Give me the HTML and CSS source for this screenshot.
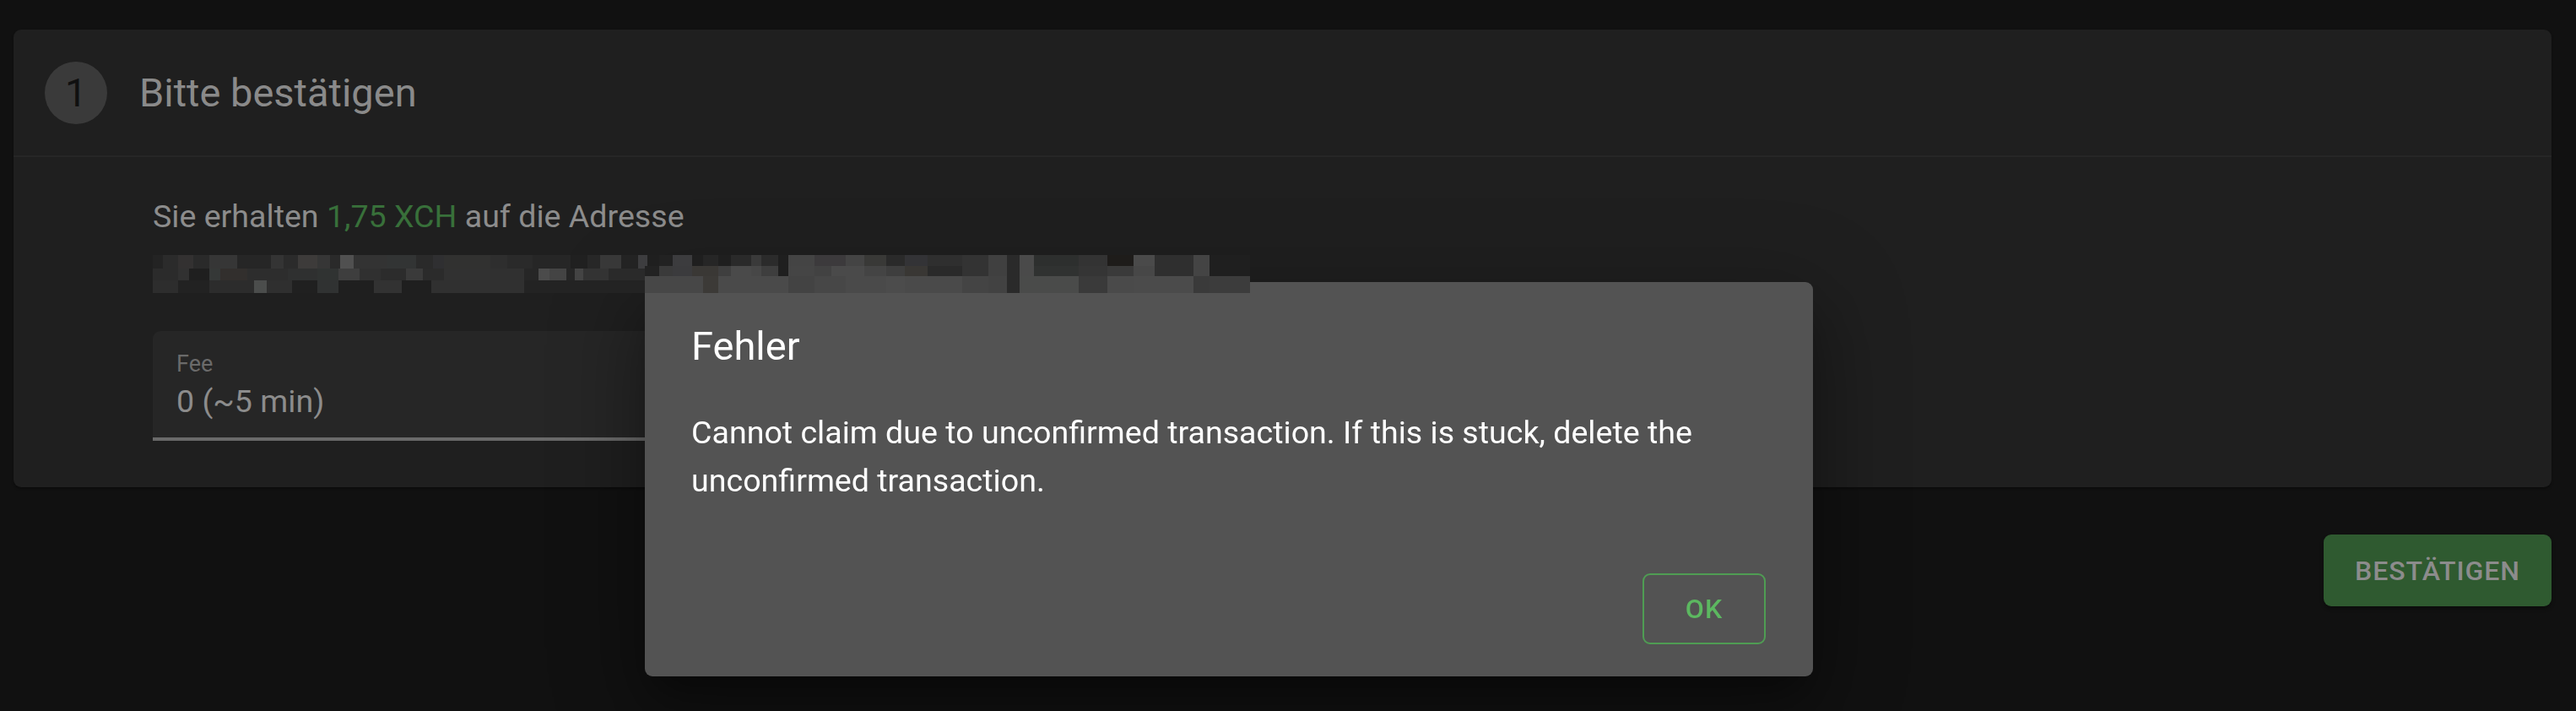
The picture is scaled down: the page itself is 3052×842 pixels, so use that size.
FILE: index.html
```html
<!DOCTYPE html>
<html lang="de">
<head>
<meta charset="utf-8">
<title>Bitte bestätigen</title>
<link rel="stylesheet" href="styles.css">
</head>
<body>
<div class="page">
  <section class="card">
    <header class="card-head">
      <span class="step-icon">1</span>
      <h2 class="step-title">Bitte bestätigen</h2>
    </header>
    <div class="card-body">
      <p class="receive">Sie erhalten <span class="amount">1,75 XCH</span> auf die Adresse</p>
      <div class="address" aria-label="Adresse (unkenntlich gemacht)">
        <svg class="mosaic" width="1300" height="45" viewBox="0 0 1300 45" xmlns="http://www.w3.org/2000/svg">
          <g>
            <rect x="0" y="0" width="12" height="16" fill="#232323"/>
            <rect x="12" y="0" width="18" height="16" fill="#2b2b2b"/>
            <rect x="30" y="0" width="18" height="16" fill="#333131"/>
            <rect x="48" y="0" width="19" height="16" fill="#2a2a2a"/>
            <rect x="67" y="0" width="33" height="16" fill="#363636"/>
            <rect x="100" y="0" width="40" height="16" fill="#262626"/>
            <rect x="140" y="0" width="15" height="16" fill="#343434"/>
            <rect x="155" y="0" width="17" height="16" fill="#2b2b2b"/>
            <rect x="172" y="0" width="23" height="16" fill="#3d3b3a"/>
            <rect x="195" y="0" width="15" height="16" fill="#363636"/>
            <rect x="210" y="0" width="12" height="16" fill="#2a2a2a"/>
            <rect x="222" y="0" width="16" height="16" fill="#505050"/>
            <rect x="238" y="0" width="40" height="16" fill="#333333"/>
            <rect x="278" y="0" width="34" height="16" fill="#323434"/>
            <rect x="312" y="0" width="20" height="16" fill="#2a2a2a"/>
            <rect x="332" y="0" width="13" height="16" fill="#2f2f31"/>
            <rect x="345" y="0" width="55" height="16" fill="#313130"/>
            <rect x="400" y="0" width="20" height="16" fill="#2e2e2e"/>
            <rect x="420" y="0" width="30" height="16" fill="#2a2a2a"/>
            <rect x="450" y="0" width="45" height="16" fill="#262626"/>
            <rect x="495" y="0" width="20" height="16" fill="#202020"/>
            <rect x="515" y="0" width="15" height="16" fill="#272727"/>
            <rect x="530" y="0" width="25" height="16" fill="#383838"/>
            <rect x="555" y="0" width="20" height="16" fill="#232323"/>
            <rect x="575" y="0" width="11" height="16" fill="#3d3d3f"/>
          </g>
          <g>
            <rect x="0" y="16" width="30" height="14" fill="#2b2b2b"/>
            <rect x="30" y="16" width="13" height="14" fill="#313131"/>
            <rect x="43" y="16" width="24" height="14" fill="#1f1f1f"/>
            <rect x="67" y="16" width="13" height="14" fill="#353837"/>
            <rect x="80" y="16" width="32" height="14" fill="#322f2d"/>
            <rect x="112" y="16" width="48" height="14" fill="#2d2d2d"/>
            <rect x="160" y="16" width="35" height="14" fill="#2f3030"/>
            <rect x="195" y="16" width="25" height="14" fill="#303332"/>
            <rect x="220" y="16" width="25" height="14" fill="#3e3e3e"/>
            <rect x="245" y="16" width="25" height="14" fill="#303030"/>
            <rect x="270" y="16" width="30" height="14" fill="#2c2c2c"/>
            <rect x="300" y="16" width="20" height="14" fill="#3a3a3a"/>
            <rect x="320" y="16" width="25" height="14" fill="#2b2b2b"/>
            <rect x="345" y="16" width="55" height="14" fill="#313131"/>
            <rect x="400" y="16" width="40" height="14" fill="#303030"/>
            <rect x="440" y="16" width="17" height="14" fill="#262626"/>
            <rect x="457" y="16" width="13" height="14" fill="#4b4b4b"/>
            <rect x="470" y="16" width="20" height="14" fill="#444444"/>
            <rect x="490" y="16" width="10" height="14" fill="#262626"/>
            <rect x="500" y="16" width="10" height="14" fill="#444444"/>
            <rect x="510" y="16" width="30" height="14" fill="#333333"/>
            <rect x="540" y="16" width="43" height="14" fill="#2a2a2a"/>
          </g>
          <g>
            <rect x="0" y="30" width="30" height="15" fill="#2d2d2d"/>
            <rect x="30" y="30" width="37" height="15" fill="#222222"/>
            <rect x="67" y="30" width="53" height="15" fill="#2c2c2c"/>
            <rect x="120" y="30" width="15" height="15" fill="#4b4d4c"/>
            <rect x="135" y="30" width="30" height="15" fill="#2f2f2f"/>
            <rect x="165" y="30" width="30" height="15" fill="#202020"/>
            <rect x="195" y="30" width="25" height="15" fill="#303232"/>
            <rect x="220" y="30" width="42" height="15" fill="#1f1f1f"/>
            <rect x="262" y="30" width="33" height="15" fill="#323232"/>
            <rect x="295" y="30" width="35" height="15" fill="#1f1f1f"/>
            <rect x="330" y="30" width="110" height="15" fill="#303030"/>
            <rect x="440" y="30" width="143" height="15" fill="#232323"/>
          </g>
          <g>
            <rect x="586" y="0" width="14" height="13" fill="#1f1f1f"/>
            <rect x="600" y="0" width="16" height="13" fill="#222222"/>
            <rect x="616" y="0" width="23" height="13" fill="#3c3c3e"/>
            <rect x="639" y="0" width="13" height="13" fill="#1f1f1f"/>
            <rect x="652" y="0" width="18" height="13" fill="#262626"/>
            <rect x="670" y="0" width="15" height="13" fill="#1f1f1f"/>
            <rect x="685" y="0" width="24" height="13" fill="#2a2a2a"/>
            <rect x="709" y="0" width="12" height="13" fill="#3a3a3a"/>
            <rect x="721" y="0" width="20" height="13" fill="#2b2b2b"/>
            <rect x="741" y="0" width="12" height="13" fill="#1f1f1f"/>
            <rect x="753" y="0" width="31" height="13" fill="#444444"/>
            <rect x="784" y="0" width="37" height="13" fill="#3c3a3c"/>
            <rect x="821" y="0" width="22" height="13" fill="#444444"/>
            <rect x="843" y="0" width="26" height="13" fill="#393937"/>
            <rect x="869" y="0" width="22" height="13" fill="#2a2a2a"/>
            <rect x="891" y="0" width="27" height="13" fill="#333336"/>
            <rect x="918" y="0" width="41" height="13" fill="#2f2f2f"/>
            <rect x="959" y="0" width="31" height="13" fill="#333333"/>
            <rect x="990" y="0" width="22" height="13" fill="#404040"/>
            <rect x="1012" y="0" width="15" height="13" fill="#2a2a2a"/>
            <rect x="1027" y="0" width="17" height="13" fill="#4a4a4a"/>
            <rect x="1044" y="0" width="53" height="13" fill="#2d2f2e"/>
            <rect x="1097" y="0" width="34" height="13" fill="#333333"/>
            <rect x="1131" y="0" width="31" height="13" fill="#1e1c1a"/>
            <rect x="1162" y="0" width="25" height="13" fill="#4a4a4a"/>
            <rect x="1187" y="0" width="46" height="13" fill="#2f2f2f"/>
            <rect x="1233" y="0" width="19" height="13" fill="#444444"/>
            <rect x="1252" y="0" width="48" height="13" fill="#1f1f1f"/>
          </g>
          <g>
            <rect x="583" y="13" width="17" height="12" fill="#222222"/>
            <rect x="600" y="13" width="16" height="12" fill="#3a3a3a"/>
            <rect x="616" y="13" width="23" height="12" fill="#3b3b3d"/>
            <rect x="639" y="13" width="31" height="12" fill="#3a3835"/>
            <rect x="670" y="13" width="15" height="12" fill="#3f3f3f"/>
            <rect x="685" y="13" width="24" height="12" fill="#4a4a4a"/>
            <rect x="709" y="13" width="12" height="12" fill="#474747"/>
            <rect x="721" y="13" width="20" height="12" fill="#3e3e3e"/>
            <rect x="741" y="13" width="12" height="12" fill="#1f1f1f"/>
            <rect x="753" y="13" width="31" height="12" fill="#454545"/>
            <rect x="784" y="13" width="20" height="12" fill="#424242"/>
            <rect x="804" y="13" width="39" height="12" fill="#4a4a4a"/>
            <rect x="843" y="13" width="26" height="12" fill="#444444"/>
            <rect x="869" y="13" width="22" height="12" fill="#3e3e3e"/>
            <rect x="891" y="13" width="27" height="12" fill="#393734"/>
            <rect x="918" y="13" width="41" height="12" fill="#2a2a2a"/>
            <rect x="959" y="13" width="31" height="12" fill="#333333"/>
            <rect x="990" y="13" width="22" height="12" fill="#404040"/>
            <rect x="1012" y="13" width="15" height="12" fill="#2a2a2a"/>
            <rect x="1027" y="13" width="17" height="12" fill="#4a4a4a"/>
            <rect x="1044" y="13" width="53" height="12" fill="#303231"/>
            <rect x="1097" y="13" width="34" height="12" fill="#353535"/>
            <rect x="1131" y="13" width="31" height="12" fill="#3a3a3a"/>
            <rect x="1162" y="13" width="25" height="12" fill="#474747"/>
            <rect x="1187" y="13" width="46" height="12" fill="#2f2f2f"/>
            <rect x="1233" y="13" width="19" height="12" fill="#444444"/>
            <rect x="1252" y="13" width="48" height="12" fill="#1f1f1f"/>
          </g>
          <g>
            <rect x="583" y="25" width="69" height="20" fill="#474747"/>
            <rect x="652" y="25" width="18" height="20" fill="#3c3a37"/>
            <rect x="670" y="25" width="83" height="20" fill="#4a4a4a"/>
            <rect x="753" y="25" width="31" height="20" fill="#434343"/>
            <rect x="784" y="25" width="37" height="20" fill="#474747"/>
            <rect x="821" y="25" width="48" height="20" fill="#4a4a4a"/>
            <rect x="869" y="25" width="22" height="20" fill="#4c4c4c"/>
            <rect x="891" y="25" width="68" height="20" fill="#4a4a4a"/>
            <rect x="959" y="25" width="31" height="20" fill="#444444"/>
            <rect x="990" y="25" width="22" height="20" fill="#424242"/>
            <rect x="1012" y="25" width="15" height="20" fill="#2a2a2a"/>
            <rect x="1027" y="25" width="70" height="20" fill="#4a4b4a"/>
            <rect x="1097" y="25" width="34" height="20" fill="#3a3a3a"/>
            <rect x="1131" y="25" width="31" height="20" fill="#4a4a4a"/>
            <rect x="1162" y="25" width="71" height="20" fill="#4b4b4b"/>
            <rect x="1233" y="25" width="19" height="20" fill="#3a3a3a"/>
            <rect x="1252" y="25" width="48" height="20" fill="#3c3c3c"/>
          </g>
        </svg>
      </div>
      <div class="field">
        <label class="field-label">Fee</label>
        <div class="field-value">0 (~5 min)</div>
      </div>
    </div>
  </section>
  <div class="page-actions">
    <button class="btn-confirm" type="button">Bestätigen</button>
  </div>
</div>

<div class="dialog" role="dialog" aria-labelledby="dlg-title">
  <h2 class="dialog-title" id="dlg-title">Fehler</h2>
  <p class="dialog-text">Cannot claim due to unconfirmed transaction. If this is stuck, delete the unconfirmed transaction.</p>
  <div class="dialog-actions">
    <button class="btn-ok" type="button">OK</button>
  </div>
</div>
</body>
</html>
```

FILE: styles.css
```css
* {
  box-sizing: border-box;
}

html, body {
  margin: 0;
  height: 100%;
}

body {
  background: #111111;
  font-family: Roboto, "Liberation Sans", sans-serif;
  overflow: hidden;
}

.page {
  padding: 35px 29px 0 16px;
}

.card {
  background: #1f1f1f;
  border-radius: 9px;
  box-shadow: 0 2px 3px rgba(0, 0, 0, 0.35);
}

.card-head {
  height: 151px;
  display: flex;
  align-items: center;
  gap: 38px;
  padding-left: 37px;
  border-bottom: 2px solid #262626;
}

.step-icon {
  width: 74px;
  height: 74px;
  border-radius: 50%;
  background: #3a3a3a;
  color: #101010;
  font-size: 46px;
  display: flex;
  align-items: center;
  justify-content: center;
  flex: none;
}

.step-title {
  margin: 0;
  font-size: 47px;
  font-weight: 400;
  color: #8a8a8a;
}

.card-body {
  padding: 42px 0 55px 165px;
}

.receive {
  margin: 0;
  font-size: 37.6px;
  line-height: 56px;
  color: #8c8c8c;
}

.amount {
  color: #38703a;
}

.address {
  margin-top: 18px;
  height: 45px;
}

.mosaic {
  display: block;
  position: relative;
  z-index: 1400;
}

.field {
  margin-top: 45px;
  width: 1320px;
  height: 130px;
  background: #262626;
  border-radius: 9px 9px 0 0;
  border-bottom: 4px solid #6a6a6a;
  padding: 24px 28px 0;
}

.field-label {
  display: block;
  font-size: 27px;
  line-height: 30px;
  color: #6a6a6a;
}

.field-value {
  margin-top: 7px;
  font-size: 37.6px;
  line-height: 44px;
  color: #8c8c8c;
}

.page-actions {
  display: flex;
  justify-content: flex-end;
  margin-top: 56px;
}

.btn-confirm {
  width: 270px;
  height: 85px;
  border: none;
  border-radius: 9px;
  background: #2f5a30;
  color: #8c8c8c;
  font-family: Roboto, "Liberation Sans", sans-serif;
  font-size: 32px;
  font-weight: 500;
  letter-spacing: 1px;
  text-transform: uppercase;
  box-shadow: 0 3px 4px rgba(0, 0, 0, 0.35);
}

.dialog {
  position: fixed;
  left: 764px;
  top: 334px;
  width: 1384px;
  height: 467px;
  z-index: 1300;
  background: #535353;
  border-radius: 9px;
  box-shadow: 0 25px 34px -16px rgba(0, 0, 0, 0.3), 0 54px 86px 7px rgba(0, 0, 0, 0.2), 0 20px 104px 18px rgba(0, 0, 0, 0.18);
  display: flex;
  flex-direction: column;
}

.dialog-title {
  margin: 0;
  padding: 38px 55px 37px;
  font-size: 47px;
  line-height: 75px;
  font-weight: 400;
  color: #ffffff;
}

.dialog-text {
  margin: 0;
  padding: 0 55px;
  font-size: 37.6px;
  line-height: 57px;
  color: #ffffff;
}

.dialog-actions {
  margin-top: auto;
  display: flex;
  justify-content: flex-end;
  padding: 0 56px 38px;
}

.btn-ok {
  width: 146px;
  height: 84px;
  background: transparent;
  border: 2px solid #4f9d53;
  border-radius: 9px;
  color: #5cb860;
  font-family: Roboto, "Liberation Sans", sans-serif;
  font-size: 32px;
  font-weight: 500;
  letter-spacing: 1px;
}
```
